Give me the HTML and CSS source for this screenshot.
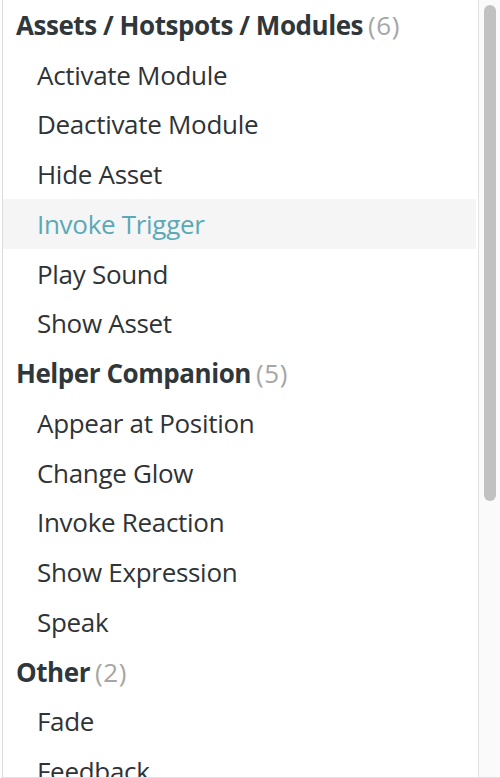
FILE: index.html
```html
<!DOCTYPE html>
<html>
<head>
<meta charset="utf-8">
<link rel="stylesheet" href="styles.css">
</head>
<body>
<div class="panel">
  <ul class="list">
    <li class="group">Assets / Hotspots / Modules <span class="count">(6)</span></li>
    <li class="item">Activate Module</li>
    <li class="item">Deactivate Module</li>
    <li class="item">Hide Asset</li>
    <li class="item active">Invoke Trigger</li>
    <li class="item">Play Sound</li>
    <li class="item">Show Asset</li>
    <li class="group">Helper Companion <span class="count">(5)</span></li>
    <li class="item">Appear at Position</li>
    <li class="item">Change Glow</li>
    <li class="item">Invoke Reaction</li>
    <li class="item">Show Expression</li>
    <li class="item">Speak</li>
    <li class="group">Other <span class="count">(2)</span></li>
    <li class="item">Fade</li>
    <li class="item">Feedback</li>
  </ul>
  <div class="scrollbar">
    <div class="thumb"></div>
  </div>
</div>
</body>
</html>
```
FILE: styles.css
```css
html, body {
  margin: 0;
  padding: 0;
  background: #ffffff;
}
body {
  font-family: "Open Sans", "DejaVu Sans", sans-serif;
}
.panel {
  margin-left: 2px;
  height: 777px;
  border-left: 1px solid #dcdcdc;
  border-bottom: 1px solid #e0e0e0;
  display: flex;
  overflow: hidden;
  background: #fff;
}
.list {
  flex: 1;
  list-style: none;
  margin: 0;
  padding: 0 2px 0 0;
  overflow: hidden;
}
.list li {
  height: 49.75px;
  display: flex;
  align-items: center;
  font-size: 26px;
  white-space: nowrap;
}
.group {
  padding-left: 13px;
  font-weight: 700;
  color: #2f373b;
  letter-spacing: -0.45px;
}
.count {
  font-weight: 400;
  color: #a6a6a6;
  letter-spacing: 0.6px;
  margin-left: 5px;
}
.item {
  padding-left: 34px;
  color: #2f3336;
  letter-spacing: -0.3px;
}
.item.active {
  background: #f5f5f5;
  color: #5aa9b6;
}
.scrollbar {
  width: 22px;
  flex: none;
  border-left: 1px solid #e4e4e4;
  background: #fafafa;
  padding: 5px 5px 0 5px;
  box-sizing: border-box;
}
.thumb {
  width: 12px;
  height: 496px;
  background: #c1c1c1;
  border-radius: 6px;
}
```
